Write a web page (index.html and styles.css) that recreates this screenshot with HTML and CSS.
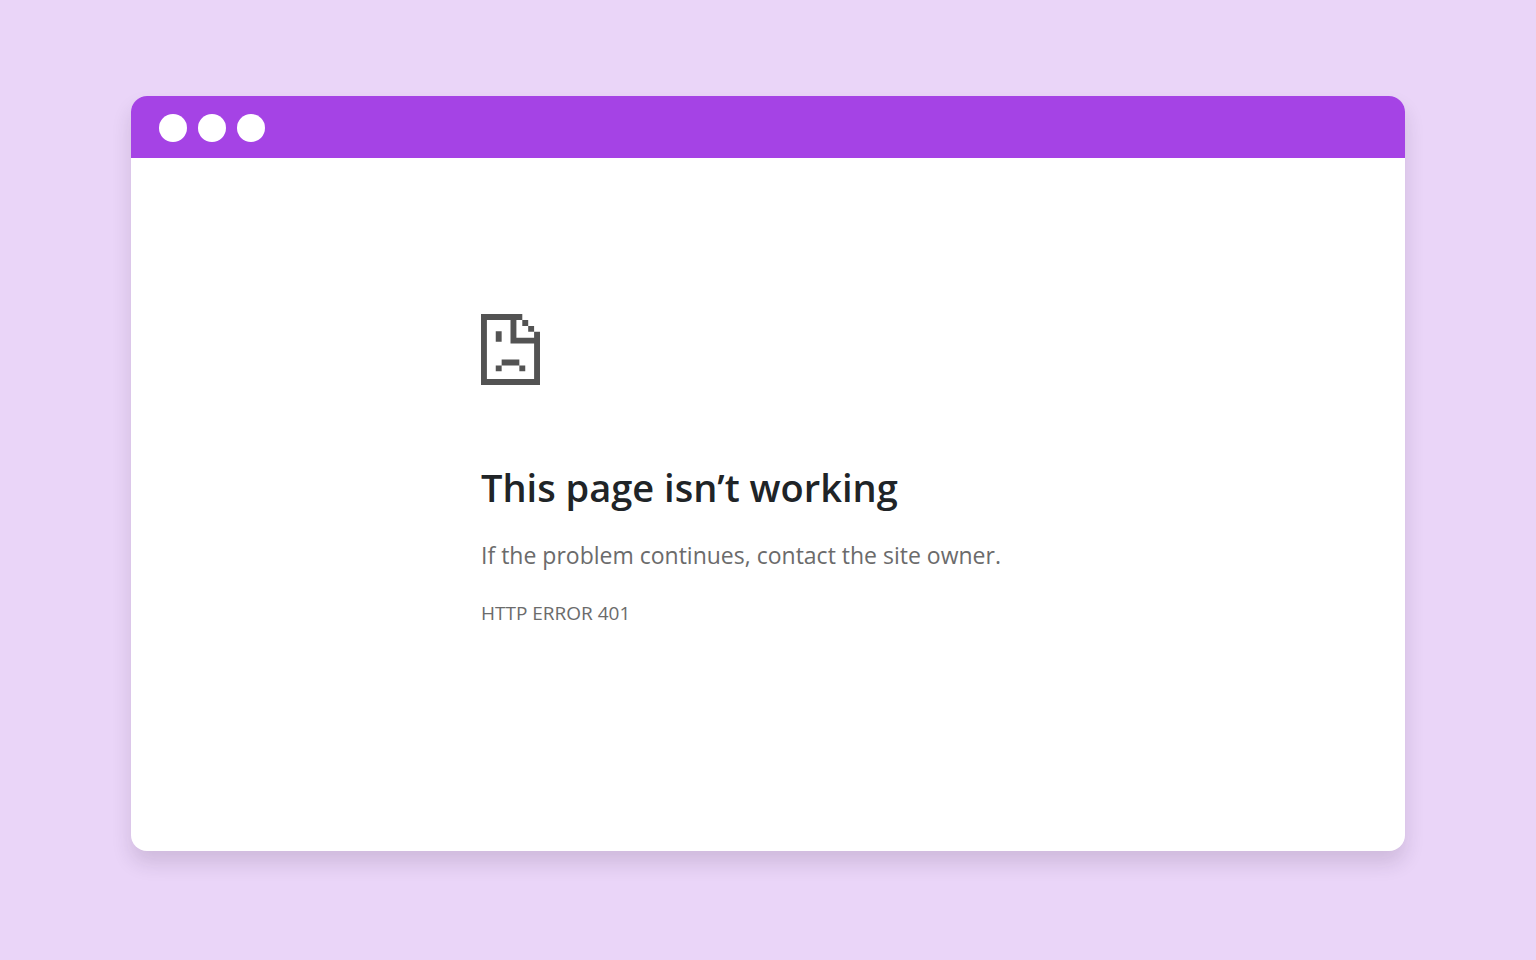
FILE: index.html
```html
<!DOCTYPE html>
<html lang="en">
<head>
    <meta charset="UTF-8">
    <meta name="viewport" content="width=device-width, initial-scale=1.0">
    <title>This page isn’t working</title>
    <link rel="stylesheet" href="styles.css">
</head>
<body>
    <div class="window">
        <header class="title-bar">
            <span class="dot"></span>
            <span class="dot"></span>
            <span class="dot"></span>
        </header>

        <main class="error-page">
            <div class="error-content">
                <!-- Sad page icon, drawn on a 10 x 12 pixel grid -->
                <svg class="error-icon" viewBox="0 0 100 120" aria-hidden="true">
                    <path fill-rule="evenodd" d="M0 0H70V10H80V20H90V30H100V120H0ZM10 10V110H90V50H50V10ZM60 10V40H90V30H80V20H70V10Z"/>
                    <path d="M25 29H35V47H25ZM35 77H65V87H75V97H65V87H35V97H25V87H35Z"/>
                </svg>
                <h1>This page isn’t working</h1>
                <p class="message">If the problem continues, contact the site owner.</p>
                <p class="error-code">HTTP ERROR 401</p>
            </div>
        </main>
    </div>
</body>
</html>
```
FILE: styles.css
```css
/* Color Theme */
:root {
    --page-bg-color: #ead5f8;
    --bar-color: #a543e5;
    --heading-color: #202427;
    --text-color: #6b6b6b;
    --icon-color: #535353;
}

/* General Styles */
* {
    box-sizing: border-box;
}
body {
    font-family: "Open Sans", "Noto Sans", sans-serif;
    display: flex;
    min-height: 100vh;
    margin: 0;
    padding: 96px 131px 109px;
    background-color: var(--page-bg-color);
    color: var(--text-color);
}

/* Browser window */
.window {
    flex: 1;
    display: flex;
    flex-direction: column;
    background-color: #fff;
    border-radius: 16px;
    box-shadow: 0 12px 20px rgba(40, 20, 60, 0.14);
    overflow: hidden;
}
.title-bar {
    display: flex;
    align-items: center;
    gap: 11px;
    height: 62px;
    padding: 2px 28px 0;
    background-color: var(--bar-color);
}
.dot {
    width: 28px;
    height: 28px;
    border-radius: 50%;
    background-color: #fff;
}

/* Error message */
.error-page {
    padding: 156px 24px;
}
.error-content {
    max-width: 574px;
    margin: 0 auto;
}
.error-icon {
    display: block;
    width: 59px;
    height: 71px;
    fill: var(--icon-color);
}
h1 {
    margin: 76px 0 0;
    font-size: 38px;
    font-weight: 600;
    line-height: 52px;
    color: var(--heading-color);
}
.message {
    margin: 26px 0 0;
    font-size: 23px;
    line-height: 32px;
}
.error-code {
    margin: 28px 0 0;
    font-size: 19px;
    line-height: 28px;
}
```
